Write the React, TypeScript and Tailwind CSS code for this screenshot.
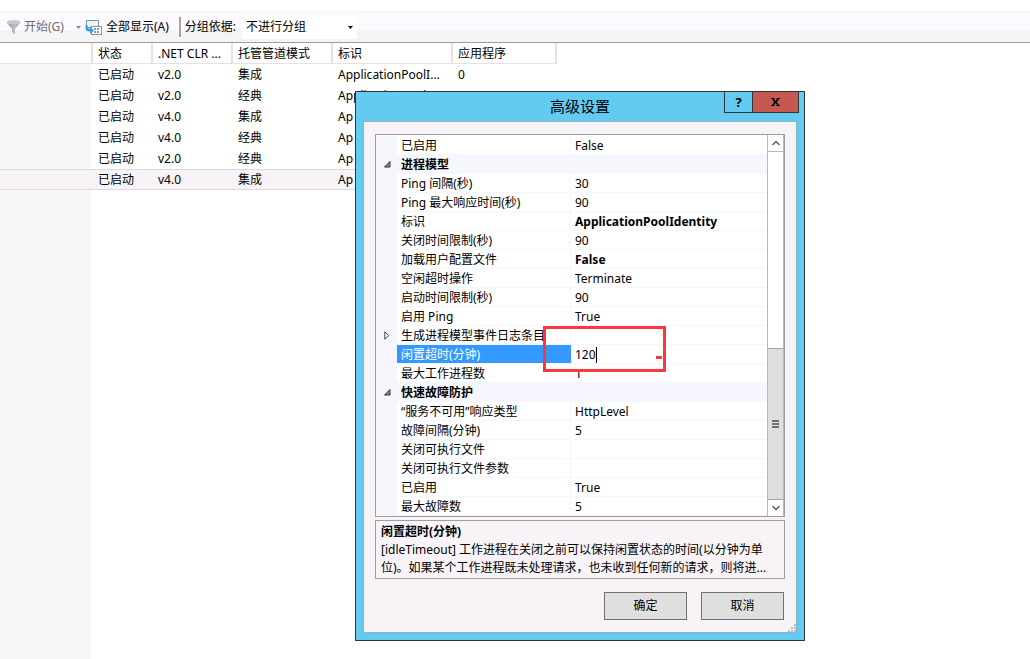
import { useState } from "react";

const COLUMNS = ["状态", ".NET CLR ...", "托管管道模式", "标识", "应用程序"];

const POOLS = [
  { clr: "v2.0", mode: "集成", identity: "ApplicationPoolI...", apps: "0" },
  { clr: "v2.0", mode: "经典", identity: "ApplicationPoolI..." },
  { clr: "v4.0", mode: "集成", identity: "Ap" },
  { clr: "v4.0", mode: "经典", identity: "Ap" },
  { clr: "v2.0", mode: "经典", identity: "Ap" },
  { clr: "v4.0", mode: "集成", identity: "Ap", selected: true },
];

type Row = {
  label: string;
  value?: string;
  kind?: "category" | "group" | "editing";
  bold?: boolean;
};

const ROWS: Row[] = [
  { label: "已启用", value: "False" },
  { label: "进程模型", kind: "category" },
  { label: "Ping 间隔(秒)", value: "30" },
  { label: "Ping 最大响应时间(秒)", value: "90" },
  { label: "标识", value: "ApplicationPoolIdentity", bold: true },
  { label: "关闭时间限制(秒)", value: "90" },
  { label: "加载用户配置文件", value: "False", bold: true },
  { label: "空闲超时操作", value: "Terminate" },
  { label: "启动时间限制(秒)", value: "90" },
  { label: "启用 Ping", value: "True" },
  { label: "生成进程模型事件日志条目", kind: "group" },
  { label: "闲置超时(分钟)", kind: "editing" },
  { label: "最大工作进程数", value: "1" },
  { label: "快速故障防护", kind: "category" },
  { label: "“服务不可用”响应类型", value: "HttpLevel" },
  { label: "故障间隔(分钟)", value: "5" },
  { label: "关闭可执行文件" },
  { label: "关闭可执行文件参数" },
  { label: "已启用", value: "True" },
  { label: "最大故障数", value: "5" },
];

function FunnelIcon() {
  return (
    <svg width="16" height="16" viewBox="0 0 16 16" aria-hidden="true">
      <path d="M.5 3.500 6 9.500V13l3 2V9.500L14.500 3.500C12 5.300 3 5.300.5 3.500z" fill="#a5a5a5" />
      <path d="M6 5.200 7 14l2 1V9.500l3-5z" fill="#bdbdbd" />
      <ellipse cx="7.500" cy="3" rx="7" ry="2" fill="#c9c9c9" />
    </svg>
  );
}

function ShowAllIcon() {
  return (
    <svg width="17" height="17" viewBox="0 0 17 17" aria-hidden="true">
      <path d="M1.500 11V1.500h12V7" fill="#eef3f6" stroke="#8094a0" />
      <path d="M3 8.500h5" stroke="#8094a0" />
      <rect x="6.500" y="7.500" width="10" height="8" fill="#fff" stroke="#8594a0" />
      <path d="M9 9h2v2H9zM12 9h2v2h-2zM9 12h2v2H9zM12 12h2v2h-2z" fill="#8792dd" />
      <path d="M.5 6v3q0 3.500 4.500 3.500V15l4-3.500L5 8v2Q2.500 10 2.500 6z" fill="#2f9fe0" />
    </svg>
  );
}

function Marker({ kind }: { kind?: Row["kind"] }) {
  if (kind === "category") {
    return (
      <svg width="7" height="7" viewBox="0 0 7 7" className="ml-2" aria-hidden="true">
        <path d="M6 .5V6H.5z" fill="#8a8a8a" stroke="#333" />
      </svg>
    );
  }
  if (kind === "group") {
    return (
      <svg width="6" height="9" viewBox="0 0 6 9" className="ml-2" aria-hidden="true">
        <path d="M.8.8v7.400L4.800 4.500z" fill="#fff" stroke="#444" />
      </svg>
    );
  }
  return null;
}

function Toolbar() {
  return (
    <div className="flex h-[32px] items-center border-t border-b border-t-[#f3f3f3] border-b-[#a09da1] bg-[linear-gradient(#fdfaff_65%,#f5f4f5_65%)] pl-1.5">
      <button type="button" disabled className="flex items-center gap-0.5 text-[#6d6d6d]">
        <FunnelIcon />
        开始(G)
      </button>
      <svg width="5" height="3" viewBox="0 0 5 3" className="ml-3 mr-1" aria-hidden="true">
        <path d="M0 0h5L2.500 3z" fill="#8a8a8a" />
      </svg>
      <button type="button" className="flex items-center gap-1">
        <ShowAllIcon />
        全部显示(A)
      </button>
      <div className="ml-2.5 mr-1 h-5 w-0.5 bg-[#a6a3a7]" />
      <label htmlFor="group-by">分组依据:</label>
      <div className="relative ml-1.5 flex h-6 w-[115px] items-center bg-white">
        <select id="group-by" className="h-full w-full appearance-none bg-white pl-1 outline-none">
          <option>不进行分组</option>
        </select>
        <svg width="5" height="3" viewBox="0 0 5 3" className="pointer-events-none absolute right-1" aria-hidden="true">
          <path d="M0 0h5L2.500 3z" fill="#000" />
        </svg>
      </div>
    </div>
  );
}

function PoolTable() {
  return (
    <table className="w-full table-fixed border-separate border-spacing-0 text-left">
      <colgroup>
        <col className="w-[93px]" />
        <col className="w-[60px]" />
        <col className="w-[80px]" />
        <col className="w-[100px]" />
        <col className="w-[120px]" />
        <col className="w-[104px]" />
        <col />
      </colgroup>
      <thead>
        <tr className="h-[21px]">
          <td className="border-b border-r-2 border-[#e5e1e5]" />
          {COLUMNS.map((name) => (
            <th key={name} className="whitespace-nowrap border-b border-r-2 border-[#e5e1e5] p-0 pl-[5px] pt-0.5 font-normal">
              {name}
            </th>
          ))}
          <td />
        </tr>
      </thead>
      <tbody>
        {POOLS.map((pool, i) => (
          <tr
            key={i}
            className={
              pool.selected
                ? "h-[21px] [&>td:not(:last-child)]:border-y [&>td:not(:last-child)]:border-[#dcd9dc] [&>td:not(:last-child)]:bg-[#f7f3f7]"
                : "h-[21px] [&>td:first-child]:bg-[linear-gradient(90deg,#f7f7f7_91px,#fff_91px)]"
            }
          >
            <td className="p-0" />
            <td className="p-0 pl-[5px]">已启动</td>
            <td className="p-0 pl-[5px]">{pool.clr}</td>
            <td className="p-0 pl-[5px]">{pool.mode}</td>
            <td className="whitespace-nowrap p-0 pl-[5px]">{pool.identity}</td>
            <td className="p-0 pl-[5px]">{pool.apps}</td>
            <td className="p-0" />
          </tr>
        ))}
      </tbody>
    </table>
  );
}

function PropertyGrid() {
  const [timeout, setTimeoutValue] = useState("120");

  return (
    <div className="flex border border-[#a09da1] bg-white">
      <div className="min-w-0 flex-1 pt-px">
        <table className="w-full table-fixed border-separate border-spacing-0 text-left">
          <colgroup>
            <col className="w-[21px]" />
            <col className="w-[174px]" />
            <col />
          </colgroup>
          <tbody>
            {ROWS.map((row, i) => {
              const category = row.kind === "category";
              const editing = row.kind === "editing";
              return (
                <tr key={i} className={category ? "h-[19px] bg-[#f6f6fe]" : "h-[19px]"}>
                  <td className="bg-[#f6f6fe] p-0">
                    <Marker kind={row.kind} />
                  </td>
                  <th
                    scope="row"
                    colSpan={category ? 2 : 1}
                    className={
                      category
                        ? "border-b border-[#f6f6fe] p-0 pl-1 pt-0.5 font-bold"
                        : editing
                          ? "whitespace-nowrap border-b border-[#f6f6fe] bg-[#3399ff] p-0 pl-1 pt-0.5 font-normal text-white"
                          : "whitespace-nowrap border-r border-b border-[#f6f6fe] p-0 pl-1 pt-0.5 font-normal"
                    }
                  >
                    {editing ? <label htmlFor="idle-timeout">{row.label}</label> : row.label}
                  </th>
                  {!category && (
                    <td
                      className={
                        row.bold
                          ? "border-b border-[#f6f6fe] p-0 pl-1 pt-0.5 font-bold"
                          : "border-b border-[#f6f6fe] p-0 pl-1 pt-0.5"
                      }
                    >
                      {editing ? (
                        <div className="flex items-center">
                          <input
                            id="idle-timeout"
                            value={timeout}
                            onChange={(e) => setTimeoutValue(e.target.value)}
                            className="h-4 w-[21px] bg-transparent outline-none"
                          />
                          <span className="h-4 w-px bg-black" />
                        </div>
                      ) : (
                        row.value
                      )}
                    </td>
                  )}
                </tr>
              );
            })}
          </tbody>
        </table>
      </div>
      <div className="flex w-[17px] flex-col border-x border-[#b9b9b9] bg-white">
        <button type="button" aria-label="向上滚动" className="flex h-[17px] items-center justify-center border-b border-[#b9b9b9]">
          <svg width="8" height="6" viewBox="0 0 8 6" fill="none" aria-hidden="true">
            <path d="M.5 5 4 1.500 7.500 5" stroke="#606060" strokeWidth="1.500" />
          </svg>
        </button>
        <div className="flex-1" />
        <div className="flex h-[152px] flex-col items-center justify-center gap-px border-y border-[#a5a5a5] bg-[#dfdfdf]">
          <span className="h-0.5 w-[7px] bg-[#707070]" />
          <span className="h-0.5 w-[7px] bg-[#707070]" />
          <span className="h-0.5 w-[7px] bg-[#707070]" />
        </div>
        <button type="button" aria-label="向下滚动" className="flex h-4 items-center justify-center">
          <svg width="8" height="6" viewBox="0 0 8 6" fill="none" aria-hidden="true">
            <path d="M.5 1 4 4.500 7.500 1" stroke="#606060" strokeWidth="1.500" />
          </svg>
        </button>
      </div>
    </div>
  );
}

function SettingsDialog() {
  return (
    <section
      role="dialog"
      aria-labelledby="dialog-title"
      className="absolute left-[355px] top-[91px] w-[450px] border border-[#2f3538] bg-[#63caf0] px-[7px] pb-[7px]"
    >
      <header className="relative flex h-[29px] items-center justify-center pb-0.5">
        <h2 id="dialog-title" className="text-[15px]">
          高级设置
        </h2>
        <div className="absolute -top-px right-[-2px] flex h-[22px] border border-[#2f3538] text-[13px] font-bold">
          <button type="button" aria-label="帮助" className="w-7 border-r border-[#2f3538]">
            ?
          </button>
          <button type="button" aria-label="关闭" className="flex w-[45px] items-center justify-center bg-[#c75850]">
            <svg width="9" height="8" viewBox="0 0 9 8" aria-hidden="true">
              <path d="M0 0h3.500v1H3l1.500 2L6 1h-.5V0H9v1H8L5.800 4 8 7h1v1H5.500V7H6L4.500 5 3 7h.5v1H0V7h1l2.200-3L1 1H0z" fill="#000" />
            </svg>
          </button>
        </div>
      </header>

      <div className="relative border border-[#86b5cc] bg-[#f7f3f7] px-[11px] pt-3 pb-3">
        <PropertyGrid />
        <div className="mt-[3px] h-[59px] overflow-hidden border border-[#a09da1] px-[5px] pt-0.5 leading-[18px]">
          <h3 className="font-bold">闲置超时(分钟)</h3>
          <p className="whitespace-nowrap">
            [idleTimeout] 工作进程在关闭之前可以保持闲置状态的时间(以分钟为单
            <br />
            位)。如果某个工作进程既未处理请求，也未收到任何新的请求，则将进...
          </p>
        </div>
        <div className="mt-[13px] flex justify-end gap-3.5 pr-px">
          <button type="button" className="h-7 w-[83px] border border-[#707070] bg-[#dfdfdf]">
            确定
          </button>
          <button type="button" className="h-7 w-[83px] border border-[#707070] bg-[#dfdfdf]">
            取消
          </button>
        </div>
        <svg width="8" height="8" viewBox="0 0 8 8" className="absolute bottom-0 right-0" aria-hidden="true">
          <path d="M6 0h2v2H6zM3 3h2v2H3zM6 3h2v2H6zM0 6h2v2H0zM3 6h2v2H3zM6 6h2v2H6z" fill="#bdbabd" />
        </svg>
      </div>

      <div className="pointer-events-none absolute left-[187px] top-[234px] h-[46px] w-[123px] border-3 border-[#fa383c]">
        <span className="absolute bottom-[10px] right-px h-[3px] w-1.5 bg-[#fa383c]" />
      </div>
    </section>
  );
}

export default function App() {
  return (
    <main className="relative flex min-h-screen flex-col bg-white pt-[11px] font-['Noto_Sans','Noto_Sans_CJK_SC',sans-serif] text-[12px] leading-4 text-black">
      <Toolbar />
      <PoolTable />
      <div className="w-[91px] flex-1 bg-[#f7f7f7]" />
      <SettingsDialog />
    </main>
  );
}
